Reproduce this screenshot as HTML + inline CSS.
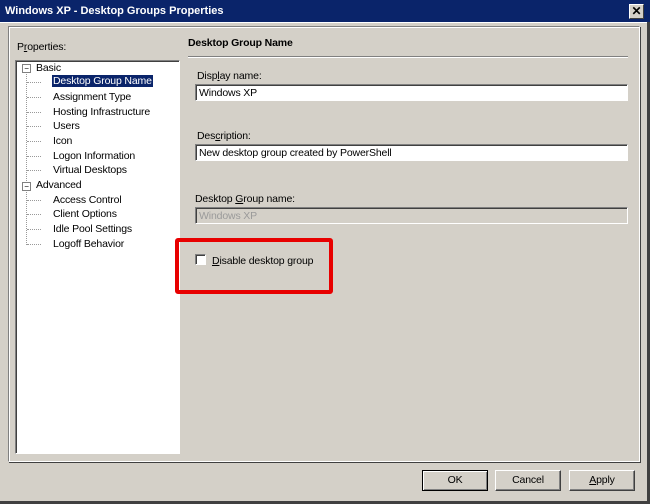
<!DOCTYPE html>
<html><head><style>
body{margin:0;width:650px;height:504px;background:#d4d0c8;font-family:"Liberation Sans",sans-serif;font-size:10.5px;letter-spacing:-0.15px;color:#000;position:relative;overflow:hidden}
.a{position:absolute}
.title{left:0;top:0;width:650px;height:22px;background:#0a246a;border-bottom:1px solid #fff}
.title span{position:absolute;left:5px;top:5px;color:#fff;font-weight:bold;font-size:11px;letter-spacing:0}
.close{left:629px;top:4px;width:13px;height:13px;background:#d4d0c8;border:1px solid #fff;border-right-color:#404040;border-bottom-color:#404040;font-weight:bold;font-size:12px;line-height:13px;text-align:center}
.panel{left:8px;top:26px;width:630px;height:434px;border:1px solid #808080;border-right-color:#fff;border-bottom-color:#fff;box-shadow:inset 1px 1px 0 #fff, 1px 1px 0 #404040}
.tree{left:15px;top:60px;width:163px;height:392px;background:#fff;border:1px solid #808080;border-right-color:#fff;border-bottom-color:#fff;box-shadow:inset 1px 1px 0 #404040}
.tree div{position:absolute;white-space:nowrap}
.inp{background:#fff;border:1px solid #808080;border-right-color:#fff;border-bottom-color:#fff;box-shadow:inset 1px 1px 0 #404040;height:16px;line-height:16px;padding-left:3px;box-sizing:border-box}
.btn{top:470px;width:66px;height:21px;border:1px solid #fff;border-right-color:#404040;border-bottom-color:#404040;box-sizing:border-box;text-align:center;line-height:19px;box-shadow:inset -1px -1px 0 #808080}
u{text-decoration:underline}
.pm{width:7px;height:7px;border:1px solid #808080;background:#fff;font-size:8px;line-height:7px;text-align:center}
.h{width:14px;height:0;border-top:1px dotted #999}
</style></head><body>
<div class="a title"><span>Windows XP - Desktop Groups Properties</span></div>
<div class="a close">✕</div>
<div class="a panel"></div>
<div class="a" style="left:17px;top:41px">P<u>r</u>operties:</div>
<div class="a tree">
<div style="left:10px;top:10px;width:0;height:174px;border-left:1px dotted #999"></div>
<div class="h" style="left:11px;top:21px"></div>
<div class="h" style="left:11px;top:36px"></div>
<div class="h" style="left:11px;top:51px"></div>
<div class="h" style="left:11px;top:65px"></div>
<div class="h" style="left:11px;top:80px"></div>
<div class="h" style="left:11px;top:95px"></div>
<div class="h" style="left:11px;top:109px"></div>
<div class="h" style="left:11px;top:139px"></div>
<div class="h" style="left:11px;top:153px"></div>
<div class="h" style="left:11px;top:168px"></div>
<div class="h" style="left:11px;top:183px"></div>
<div style="left:6px;top:3px" class="pm">−</div>
<div style="left:20px;top:1px">Basic</div>
<div style="left:36px;top:14px;background:#0a246a;color:#fff;padding:0 1px">Desktop Group Name</div>
<div style="left:37px;top:30px">Assignment Type</div>
<div style="left:37px;top:45px">Hosting Infrastructure</div>
<div style="left:37px;top:59px">Users</div>
<div style="left:37px;top:74px">Icon</div>
<div style="left:37px;top:89px">Logon Information</div>
<div style="left:37px;top:103px">Virtual Desktops</div>
<div style="left:6px;top:121px" class="pm">−</div>
<div style="left:20px;top:118px">Advanced</div>
<div style="left:37px;top:133px">Access Control</div>
<div style="left:37px;top:147px">Client Options</div>
<div style="left:37px;top:162px">Idle Pool Settings</div>
<div style="left:37px;top:177px">Logoff Behavior</div>
</div>
<div class="a" style="left:188px;top:37px;font-weight:bold">Desktop Group Name</div>
<div class="a" style="left:188px;top:56px;width:440px;border-top:1px solid #808080;border-bottom:1px solid #fff"></div>
<div class="a" style="left:197px;top:70px">Disp<u>l</u>ay name:</div>
<div class="a inp" style="left:195px;top:84px;width:433px;height:17px">Windows XP</div>
<div class="a" style="left:197px;top:130px">Des<u>c</u>ription:</div>
<div class="a inp" style="left:195px;top:144px;width:433px;height:17px">New desktop group created by PowerShell</div>
<div class="a" style="left:195px;top:193px">Desktop <u>G</u>roup name:</div>
<div class="a inp" style="left:195px;top:207px;width:433px;height:17px;background:#d4d0c8;color:#9a9a9a">Windows XP</div>
<div class="a" style="left:175px;top:238px;width:150px;height:48px;border:4px solid #e80000;border-radius:3px"></div>
<div class="a" style="left:195px;top:254px;width:9px;height:9px;background:#fff;border:1px solid #808080;border-right-color:#fff;border-bottom-color:#fff;box-shadow:inset 1px 1px 0 #404040"></div>
<div class="a" style="left:212px;top:255px"><u>D</u>isable desktop group</div>
<div class="a btn" style="left:422px;border:1px solid #000;box-shadow:inset 1px 1px 0 #fff,inset -1px -1px 0 #808080">OK</div>
<div class="a btn" style="left:495px">Cancel</div>
<div class="a btn" style="left:569px"><u>A</u>pply</div>
<div class="a" style="left:647px;top:22px;width:3px;height:482px;background:#404040"></div>
<div class="a" style="left:0;top:501px;width:650px;height:3px;background:#404040"></div>
</body></html>
